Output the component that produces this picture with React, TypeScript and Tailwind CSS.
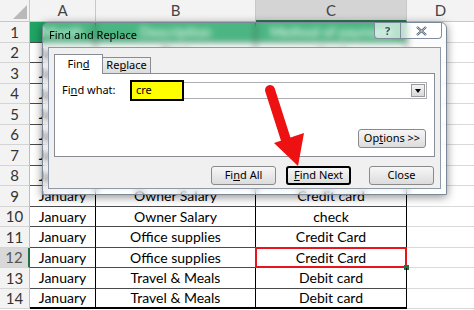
import React from "react";

const rows: [string, string, string][] = [
  ["Month", "Description", "Method of payment"],
  ["January", "Rent", "check"],
  ["January", "Utilities", "Credit card"],
  ["January", "Utilities", "Credit card"],
  ["January", "Internet", "Debit card"],
  ["January", "Phone", "Debit card"],
  ["January", "Owner Salary", "check"],
  ["January", "Owner Salary", "check"],
  ["January", "Owner Salary", "Credit card"],
  ["January", "Owner Salary", "check"],
  ["January", "Office supplies", "Credit Card"],
  ["January", "Office supplies", "Credit Card"],
  ["January", "Travel & Meals", "Debit card"],
  ["January", "Travel & Meals", "Debit card"],
];

const Btn = ({ children, className = "" }: { children: React.ReactNode; className?: string }) => (
  <div
    className={`flex h-[19px] items-center justify-center rounded-[3px] bg-gradient-to-b from-[#f6f6f6] to-[#dcdcdc] text-[11px] text-black ${className}`}
  >
    {children}
  </div>
);

const Sheet = () => (
  <div className="flex flex-col font-['Lato',sans-serif] text-[14px] text-black">
    {/* column headers */}
    <div className="flex h-[22px] bg-[#f3f3f3] text-[15px] text-[#444]">
      <div className="flex w-[30px] items-end justify-end border-r border-b border-[#c8c8c8] pr-[2px] pb-[2px]">
        <svg width="14" height="14" viewBox="0 0 14 14">
          <polygon points="14,0 14,14 0,14" fill="#b9b9b9" />
        </svg>
      </div>
      <div className="flex w-[66px] items-center justify-center border-r border-b border-[#c8c8c8]">A</div>
      <div className="flex w-[160px] items-center justify-center border-r border-b border-[#c8c8c8]">B</div>
      <div className="flex w-[151px] items-center justify-center border-r border-b-2 border-[#c8c8c8] border-b-[#2a7a4e] bg-[#d4d4d4]">C</div>
      <div className="flex flex-1 items-center justify-center border-b border-[#c8c8c8]">D</div>
    </div>
    {rows.map((r, i) => {
      const n = i + 1;
      const head = n === 1;
      const last = n === 14;
      const sel = n === 12;
      const cell = `flex items-center justify-center border-r border-black ${last ? "border-b-2" : "border-b border-b-[#4a4a4a]"}`;
      return (
        <div key={n} className="flex h-[20.5px]">
          <div
            className={`flex w-[30px] items-center justify-center border-b border-[#d4d4d4] text-[15px] ${
              sel ? "border-r-2 border-r-[#217346] bg-[#d8d8d8] text-[#555]" : "border-r border-r-[#bdbdbd] bg-[#f3f3f3] text-[#333]"
            }`}
          >
            {n}
          </div>
          <div className={`${cell} w-[66px] ${head ? "bg-[#1fa463] text-white" : ""}`}>{r[0]}</div>
          <div className={`${cell} w-[160px] ${head ? "bg-[#1fa463] text-white" : ""}`}>{r[1]}</div>
          <div className={`${cell} relative w-[151px] ${head ? "bg-[#1fa463] text-white" : ""}`}>
            {r[2]}
            {sel && (
              <>
                <div className="absolute -top-px -left-px -right-px -bottom-px border-2 border-[#e8141c]" />
                <div className="absolute -right-[3px] -bottom-[3px] h-[5px] w-[5px] bg-[#217346]" />
              </>
            )}
          </div>
          <div className="flex-1 border-b border-[#d9d9d9]" />
        </div>
      );
    })}
  </div>
);

const Dialog = () => (
  <div className="absolute left-[42px] top-[22px] flex h-[173px] w-[405px] flex-col rounded-t-[6px] border border-[#7a8898] bg-white/20 px-[5px] pb-[5px] font-['Noto_Sans',sans-serif] shadow-[0_2px_10px_rgba(0,0,0,0.45)] backdrop-blur-[3px]">
    {/* title bar */}
    <div className="flex h-[24px] items-start justify-between">
      <div className="pt-[5px] pl-px text-[11px] leading-[14px] text-black">Find and Replace</div>
      <div className="mr-[-1px] flex h-[16px] rounded-b-[4px] border border-t-0 border-[#7f8d9c] bg-white/60">
        <div className="flex w-[26px] items-center justify-center border-r border-[#7f8d9c] text-[11px] leading-none font-bold text-[#3d4f63]">?</div>
        <div className="flex w-[40px] items-center justify-center">
          <svg width="11" height="10" viewBox="0 0 11 10">
            <path d="M1 1 L10 9 M10 1 L1 9" stroke="#3d4f63" strokeWidth="2.2" fill="none" />
            <path d="M1 1 L10 9 M10 1 L1 9" stroke="#f4f6f8" strokeWidth="0.8" fill="none" />
          </svg>
        </div>
      </div>
    </div>
    {/* body */}
    <div className="flex flex-1 flex-col border border-[#8e9aa8] bg-[#f0f0f0] px-[5px] pt-[6px] pb-[3px] text-[11px]">
      {/* tabs */}
      <div className="flex h-[19px] items-end">
        <div className="relative z-10 -mb-px flex h-[20px] w-[49px] items-center justify-center border border-b-0 border-[#898c95] bg-white">
          <span>
            Fin<span className="underline">d</span>
          </span>
        </div>
        <div className="flex h-[16px] w-[48px] items-center justify-center border border-l-0 border-b-0 border-[#898c95] bg-gradient-to-b from-[#f2f2f2] to-[#dcdcdc]">
          <span>
            Re<span className="underline">p</span>lace
          </span>
        </div>
      </div>
      <div className="flex h-[84px] flex-col border border-[#898c95] bg-white px-[7px] pt-[8px] pb-[8px]">
        <div className="flex items-center">
          <div className="w-[68px]">
            Fi<span className="underline">n</span>d what:
          </div>
          <div className="relative flex h-[17px] flex-1 items-center justify-end border border-[#abadb3] bg-white pr-px">
            <div className="absolute -left-[1px] -top-[3px] flex h-[21px] w-[54px] items-center border-2 border-black bg-[#ffff00] pl-[4px] text-[11px]">
              cre
            </div>
            <div className="flex h-[13px] w-[14px] items-center justify-center border border-[#9a9a9a] bg-gradient-to-b from-[#f4f4f4] to-[#d8d8d8]">
              <div className="h-0 w-0 border-x-[3.5px] border-t-[4px] border-x-transparent border-t-black" />
            </div>
          </div>
        </div>
        <div className="mt-auto flex justify-end pr-px">
          <Btn className="w-[68px] border border-[#8a8a8a]">
            <span>
              Op<span className="underline">t</span>ions &gt;&gt;
            </span>
          </Btn>
        </div>
      </div>
      <div className="mt-auto flex justify-end gap-[10px] pr-px">
        <Btn className="w-[65px] border border-[#8a8a8a]">
          <span>
            Fi<span className="underline">n</span>d All
          </span>
        </Btn>
        <Btn className="mr-[8px] w-[65px] border-2 border-black">
          <span>
            <span className="underline">F</span>ind Next
          </span>
        </Btn>
        <Btn className="w-[65px] border border-[#8a8a8a]">Close</Btn>
      </div>
    </div>
  </div>
);

export default function App() {
  return (
    <div className="relative h-[310px] w-[474px] overflow-hidden bg-white">
      <Sheet />
      <Dialog />
      <svg className="pointer-events-none absolute left-0 top-0" width="474" height="310">
        <line x1="270" y1="90" x2="286" y2="140" stroke="#ee1111" strokeWidth="10" strokeLinecap="round" />
        <polygon points="274,143 304,133 298,166" fill="#ee1111" />
      </svg>
    </div>
  );
}
